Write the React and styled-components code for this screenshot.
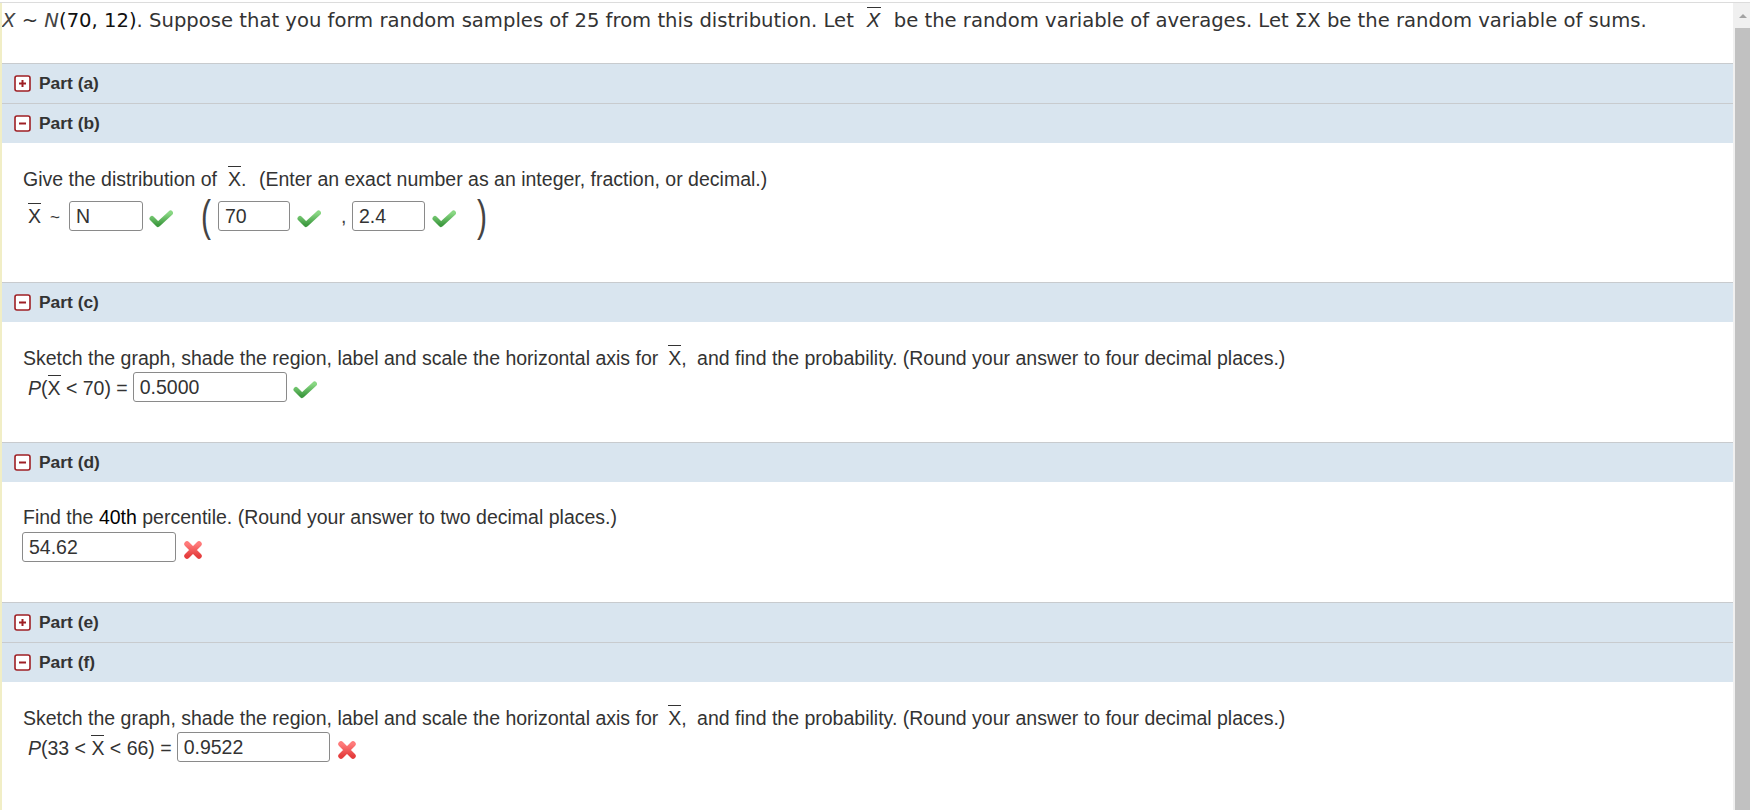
import React from "react";
import styled, { createGlobalStyle } from "styled-components";

const GlobalStyle = createGlobalStyle`
  html, body {
    margin: 0;
    padding: 0;
    background: #fff;
    overflow: hidden;
  }
  body {
    font-family: "Liberation Sans", Arial, sans-serif;
  }
`;

const Page = styled.div`
  display: flex;
  height: 807px;
  margin-top: 2px;
  border-top: 1px solid #dcdcdc;
`;

const Main = styled.div`
  flex: 1;
  min-width: 0;
  border-left: 2px solid #f1eec6;
  overflow: hidden;
`;

const Intro = styled.div`
  height: 60px;
  box-sizing: border-box;
  padding-top: 4px;
  font-family: "DejaVu Sans", Verdana, sans-serif;
  font-size: 19.6px;
  line-height: 24px;
  color: #333;
  white-space: nowrap;
`;

const Em = styled.i`
  color: #444;
`;

const Dark = styled.span`
  color: #111;
`;

const Bar = styled.span`
  display: inline-block;
  line-height: 1;
  padding-top: 3px;
  border-top: 1px solid currentColor;
  font-style: ${(p) => (p.$italic ? "italic" : "normal")};
  margin-left: ${(p) => p.$ml || 0}px;
  margin-right: ${(p) => p.$mr || 0}px;
`;

const Gap = styled.span`
  display: inline-block;
  width: ${(p) => p.$w}px;
`;

const PartHeader = styled.div`
  height: 39px;
  border-top: 1px solid #c8cbce;
  background: #d9e5ef;
  display: flex;
  align-items: center;
  gap: 8px;
  padding-left: 12px;
  font-size: 17.4px;
  font-weight: bold;
  color: #333;
`;

const PartBody = styled.div`
  padding: 23px 0 ${(p) => p.$bottom || 40}px 21px;
  font-size: 19.5px;
  color: #333;
`;

const Prompt = styled.div`
  height: 24px;
  line-height: 24px;
  white-space: nowrap;
`;

const Strong = styled.span`
  color: #000;
`;

const AnswerRow = styled.div`
  display: flex;
  align-items: center;
  margin-top: 3px;
  height: ${(p) => p.$h || 30}px;
  white-space: nowrap;
`;

const Label = styled.span`
  margin-left: ${(p) => p.$ml ?? 5}px;
  line-height: 24px;
`;

const Tilde = styled.span`
  margin-left: 9px;
  font-size: 17px;
`;

const AnswerBox = styled.div`
  box-sizing: border-box;
  width: ${(p) => p.$w}px;
  height: 30px;
  margin-left: ${(p) => p.$ml ?? 5}px;
  border: 1px solid #8a8a8a;
  border-radius: 3px;
  padding-left: 6px;
  display: flex;
  align-items: center;
  font-size: 19.5px;
  color: #333;
  background: #fff;
`;

const Mark = styled.span`
  display: inline-flex;
  margin-left: ${(p) => p.$ml ?? 6}px;
  margin-top: ${(p) => p.$mt ?? 5}px;
`;

const Paren = styled.span`
  display: inline-block;
  width: 10px;
  margin-left: ${(p) => p.$ml || 0}px;
  font-size: 30px;
  line-height: 30px;
  color: #444;
  transform: scaleY(1.45);
`;

const Comma = styled.span`
  margin-left: ${(p) => p.$ml || 0}px;
  width: 5px;
  color: #444;
`;

const Scrollbar = styled.div`
  width: 17px;
  background: #f0f0f0;
  display: flex;
  flex-direction: column;
  align-items: flex-end;
`;

const ScrollArrow = styled.div`
  width: 15px;
  height: 25px;
  display: flex;
  align-items: center;
  justify-content: center;

  &::before {
    content: "";
    width: 0;
    height: 0;
    border-left: 4px solid transparent;
    border-right: 4px solid transparent;
    border-bottom: 4px solid #a3a3a3;
  }
`;

const ScrollThumb = styled.div`
  flex: 1;
  width: 15px;
  background: #c1c1c1;
`;

const ToggleIcon = ({ open }) => (
  <svg width="17" height="17" viewBox="0 0 17 17">
    <rect x="1" y="1" width="15" height="15" rx="2" fill="#fff" stroke="#9e1f24" strokeWidth="1.6" />
    <line x1="5" y1="8.5" x2="12" y2="8.5" stroke="#9e1f24" strokeWidth="2" />
    {!open && <line x1="8.5" y1="5" x2="8.5" y2="12" stroke="#9e1f24" strokeWidth="2" />}
  </svg>
);

const CheckIcon = () => (
  <svg width="24" height="18" viewBox="0 0 24 18">
    <defs>
      <linearGradient id="chk" x1="0" y1="0" x2="0" y2="1">
        <stop offset="0" stopColor="#8ad884" />
        <stop offset="1" stopColor="#3f9b41" />
      </linearGradient>
    </defs>
    <path
      d="M3 8.5 L9 14.5 L21.5 3"
      fill="none"
      stroke="url(#chk)"
      strokeWidth="5"
      strokeLinecap="round"
      strokeLinejoin="round"
    />
  </svg>
);

const CrossIcon = () => (
  <svg width="22" height="22" viewBox="0 0 22 22">
    <defs>
      <linearGradient id="crs" x1="0" y1="0" x2="0" y2="1">
        <stop offset="0" stopColor="#ff7b7b" />
        <stop offset="1" stopColor="#e53e3e" />
      </linearGradient>
    </defs>
    <path
      d="M5 5 L17 17 M17 5 L5 17"
      fill="none"
      stroke="url(#crs)"
      strokeWidth="5.5"
      strokeLinecap="round"
    />
  </svg>
);

const Header = ({ open, children }) => (
  <PartHeader>
    <ToggleIcon open={open} />
    <span>{children}</span>
  </PartHeader>
);

const Xbar = ({ italic, ml, mr }) => (
  <Bar $italic={italic} $ml={ml} $mr={mr}>
    X
  </Bar>
);

const SketchPrompt = () => (
  <Prompt>
    Sketch the graph, shade the region, label and scale the horizontal axis for
    <Xbar ml={10} />,<Gap $w={5} /> and find the probability. (Round your answer to four decimal
    places.)
  </Prompt>
);

const App = () => {
  return (
    <>
      <GlobalStyle />
      <Page>
        <Main>
          <Intro>
            <Em>X</Em> ~ <Em>N</Em>
            <Dark>(70, 12)</Dark>. Suppose that you form random samples of 25 from this
            distribution. Let <Xbar italic ml={7} mr={7} /> be the random variable of averages.
            Let ΣX be the random variable of sums.
          </Intro>

          <Header>Part (a)</Header>

          <Header open>Part (b)</Header>
          <PartBody $bottom={43}>
            <Prompt>
              Give the distribution of
              <Xbar ml={11} />.<Gap $w={7} /> (Enter an exact number as an integer, fraction, or
              decimal.)
            </Prompt>
            <AnswerRow $h={46}>
              <Label>
                <Xbar />
                <Tilde>~</Tilde>
              </Label>
              <AnswerBox $w={74} $ml={9}>N</AnswerBox>
              <Mark>
                <CheckIcon />
              </Mark>
              <Paren $ml={28}>(</Paren>
              <AnswerBox $w={72} $ml={7}>70</AnswerBox>
              <Mark $ml={7}>
                <CheckIcon />
              </Mark>
              <Comma $ml={20}>,</Comma>
              <AnswerBox $w={73} $ml={6}>2.4</AnswerBox>
              <Mark $ml={7}>
                <CheckIcon />
              </Mark>
              <Paren $ml={21}>)</Paren>
            </AnswerRow>
          </PartBody>

          <Header open>Part (c)</Header>
          <PartBody>
            <SketchPrompt />
            <AnswerRow>
              <Label>
                <i>P</i>(<Xbar /> &lt; 70) =
              </Label>
              <AnswerBox $w={154}>0.5000</AnswerBox>
              <Mark>
                <CheckIcon />
              </Mark>
            </AnswerRow>
          </PartBody>

          <Header open>Part (d)</Header>
          <PartBody>
            <Prompt>
              Find the <Strong>40th</Strong> percentile. (Round your answer to two decimal places.)
            </Prompt>
            <AnswerRow>
              <AnswerBox $w={154} $ml={-1}>54.62</AnswerBox>
              <Mark $mt={6}>
                <CrossIcon />
              </Mark>
            </AnswerRow>
          </PartBody>

          <Header>Part (e)</Header>

          <Header open>Part (f)</Header>
          <PartBody>
            <SketchPrompt />
            <AnswerRow>
              <Label>
                <i>P</i>(33 &lt; <Xbar /> &lt; 66) =
              </Label>
              <AnswerBox $w={153}>0.9522</AnswerBox>
              <Mark $mt={6}>
                <CrossIcon />
              </Mark>
            </AnswerRow>
          </PartBody>
        </Main>
        <Scrollbar>
          <ScrollArrow />
          <ScrollThumb />
        </Scrollbar>
      </Page>
    </>
  );
};

export default App;
